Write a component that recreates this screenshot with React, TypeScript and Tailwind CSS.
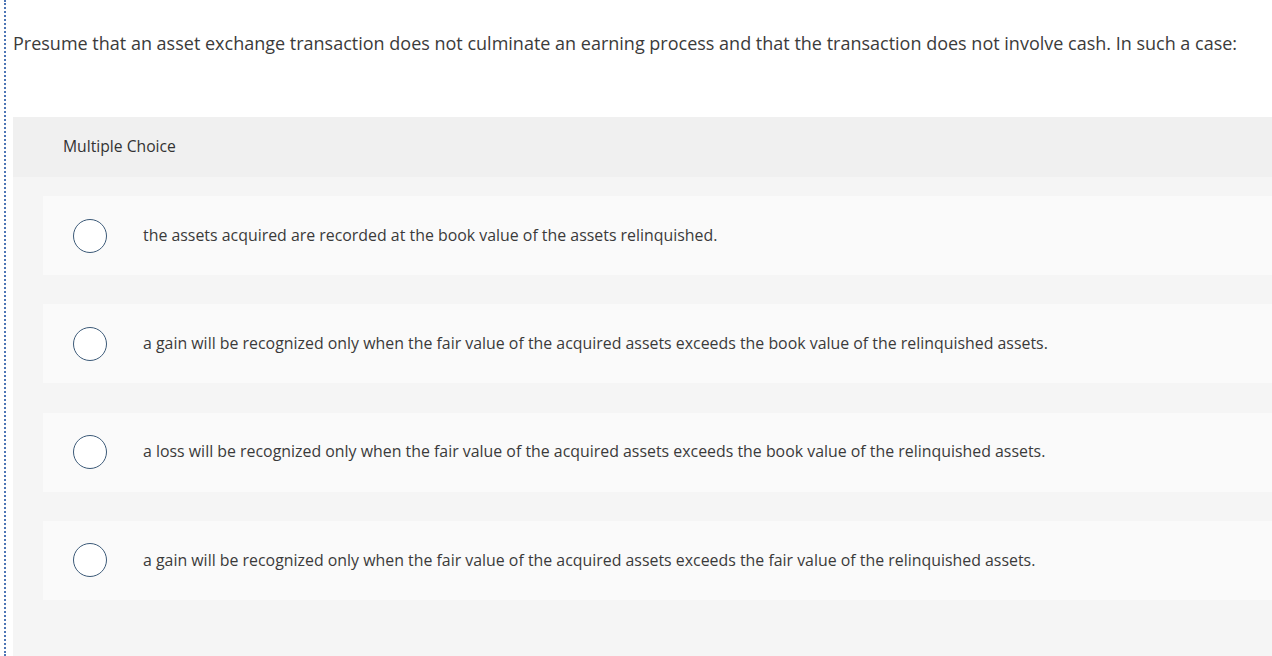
import React from "react"

const options = [
  "the assets acquired are recorded at the book value of the assets relinquished.",
  "a gain will be recognized only when the fair value of the acquired assets exceeds the book value of the relinquished assets.",
  "a loss will be recognized only when the fair value of the acquired assets exceeds the book value of the relinquished assets.",
  "a gain will be recognized only when the fair value of the acquired assets exceeds the fair value of the relinquished assets.",
]

export default function App() {
  return (
    <div
      className="flex h-[656px] w-full overflow-hidden bg-white text-[#333]"
      style={{ fontFamily: "'Open Sans', Lato, sans-serif" }}
    >
      <div className="ml-[4px] w-0 border-l-2 border-dotted border-[#4d75b5]" />
      <div className="ml-[7px] flex-1">
        {/* Question */}
        <div className="flex h-[117px] items-start pt-[31px]">
          <p className="text-[18px] leading-[24px] text-[#3b3b3b]">
            Presume that an asset exchange transaction does not culminate an earning process and that the
            transaction does not involve cash. In such a case:
          </p>
        </div>

        {/* Choices panel */}
        <div className="bg-[#f5f5f5] pb-[60px]">
          <div className="flex h-[60px] items-center bg-[#f0f0f0] pl-[50px] text-[15.7px] text-[#333]">
            Multiple Choice
          </div>
          <div className="flex flex-col gap-[29.33px] pl-[30px] pt-[19px]">
            {options.map((opt, i) => (
              <div key={i} className="flex h-[79px] items-center bg-[#fafafa] pl-[30px]">
                <span className="h-[34px] w-[34px] shrink-0 rounded-full border-[1.5px] border-[#3c5a78] bg-white" />
                <span className="ml-[36px] text-[15.9px] text-[#3a3a3a]">{opt}</span>
              </div>
            ))}
          </div>
        </div>
      </div>
    </div>
  )
}
